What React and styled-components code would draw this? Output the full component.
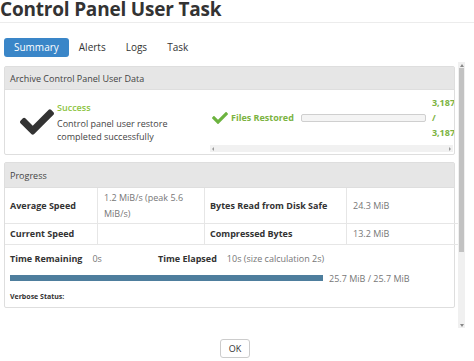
import React from 'react';
import styled, { createGlobalStyle } from 'styled-components';
import { FaCheck } from 'react-icons/fa';

const Global = createGlobalStyle`
  html, body { margin: 0; padding: 0; background: #fff; overflow: hidden; }
  body { font-family: "Open Sans", "Liberation Sans", sans-serif; color: #333; }
  * { box-sizing: border-box; }
`;

const Dialog = styled.div`
  width: 474px;
  height: 361px;
  display: flex;
  flex-direction: column;
  overflow: hidden;
`;

const Header = styled.div`
  height: 23px;
  border-bottom: 1px solid #ececec;
`;

const Title = styled.h1`
  margin: 0;
  font-size: 19px;
  font-weight: 700;
  line-height: 19px;
  letter-spacing: -0.2px;
  color: #333;
  white-space: nowrap;
`;

const TabBar = styled.div`
  display: flex;
  padding-left: 4px;
  margin-top: 15px;
`;

const Tab = styled.div`
  height: 19px;
  padding: 0 10px;
  font-size: 10px;
  line-height: 19px;
  border-radius: 3px;
  background: ${p => (p.$active ? '#3a86c8' : 'transparent')};
  color: ${p => (p.$active ? '#fff' : '#333')};
`;

const Body = styled.div`
  display: flex;
  margin-top: 5px;
  height: 266px;
`;

const ScrollContent = styled.div`
  width: 458px;
  padding: 4px 3px 0 4px;
  overflow: hidden;
`;

const VScroll = styled.div`
  width: 7px;
  display: flex;
  flex-direction: column;
  align-items: stretch;
  background: #f0f0f0;
`;

const Arrow = styled.div`
  height: 6px;
  display: flex;
  align-items: center;
  justify-content: center;
  &::before {
    content: '';
    border-left: 2px solid transparent;
    border-right: 2px solid transparent;
    ${p => (p.$dir === 'up' ? 'border-bottom: 3px solid #888;' : 'border-top: 3px solid #888;')}
  }
`;

const Thumb = styled.div`
  height: 184px;
  margin: 0 1px;
  background: #c2c2c2;
`;

const Track = styled.div`
  flex: 1;
`;

const Panel = styled.div`
  border: 1px solid #dedede;
  border-radius: 2px;
  margin-bottom: 7px;
  background: #fff;
`;

const PanelHeader = styled.div`
  height: ${p => p.$h}px;
  line-height: ${p => p.$h}px;
  background: #e6e6e6;
  border-bottom: 1px solid #dedede;
  padding-left: 5px;
  font-size: 9px;
  color: #444;
`;

const ResultBody = styled.div`
  height: 64px;
  display: flex;
`;

const ResultLeft = styled.div`
  width: 203px;
  display: flex;
  align-items: center;
  padding-left: 15px;
  flex-shrink: 0;
`;

const BigCheck = styled(FaCheck)`
  width: 34px;
  height: 34px;
  color: #333;
  flex-shrink: 0;
`;

const ResultText = styled.div`
  margin-left: 3px;
  font-size: 9px;
  line-height: 13px;
  color: #444;
`;

const SuccessLabel = styled.div`
  color: #8cc43f;
  font-weight: 600;
  margin-bottom: 3px;
`;

const ResultRight = styled.div`
  flex: 1;
  display: flex;
  flex-direction: column;
  overflow: hidden;
  padding-bottom: 2px;
`;

const FileRow = styled.div`
  flex: 1;
  display: flex;
  align-items: center;
  padding-left: 4px;
  white-space: nowrap;
`;

const SmallCheck = styled(FaCheck)`
  width: 16px;
  height: 16px;
  color: #6cb33f;
  flex-shrink: 0;
`;

const GreenLabel = styled.span`
  margin-left: 3px;
  font-size: 9px;
  font-weight: 700;
  color: #7cb342;
`;

const EmptyBar = styled.div`
  width: 125px;
  height: 8px;
  margin-left: 7px;
  border: 1px solid #cfcfcf;
  border-radius: 2px;
  background: #f4f4f4;
  flex-shrink: 0;
`;

const Count = styled.div`
  margin-left: 6px;
  font-size: 9px;
  font-weight: 700;
  color: #7cb342;
  line-height: 15px;
  flex-shrink: 0;
`;

const HScroll = styled.div`
  height: 7px;
  margin: 0 1px 0 2px;
  background: #f1f1f1;
  display: flex;
  justify-content: space-between;
  align-items: center;
  padding: 0 2px;
`;

const HArrow = styled.span`
  border-top: 2px solid transparent;
  border-bottom: 2px solid transparent;
  ${p => (p.$dir === 'left' ? 'border-right: 2px solid #999;' : 'border-left: 2px solid #999;')}
`;

const StatGrid = styled.div`
  display: grid;
  grid-template-columns: 93px 107px 142px 111px;
  grid-template-rows: 36px 21px;
`;

const Cell = styled.div`
  display: flex;
  align-items: center;
  padding: 0 ${p => (p.$value ? 6 : 5)}px 0 ${p => (p.$value ? 6 : 5)}px;
  font-size: 9px;
  line-height: 16px;
  font-weight: ${p => (p.$value ? 400 : 700)};
  color: ${p => (p.$value ? '#777' : '#333')};
  border-bottom: 1px solid #e6e6e6;
  border-right: ${p => (p.$last ? 'none' : '1px solid #e6e6e6')};
`;

const TimeRow = styled.div`
  display: flex;
  margin-top: 6px;
  height: 15px;
  align-items: center;
  padding-left: 5px;
  font-size: 9px;
  white-space: nowrap;
`;

const TimeGroup = styled.div`
  display: flex;
  width: ${p => (p.$w ? `${p.$w}px` : 'auto')};
`;

const TimeLabel = styled.span`
  font-weight: 700;
  color: #333;
`;

const TimeValue = styled.span`
  margin-left: 10px;
  color: #777;
`;

const BarRow = styled.div`
  display: flex;
  align-items: center;
  margin-top: 5px;
  height: 14px;
  padding-left: 5px;
`;

const Bar = styled.div`
  width: 313px;
  height: 6px;
  background: #4e7e9d;
`;

const BarText = styled.span`
  margin-left: 6px;
  font-size: 9px;
  color: #777;
  white-space: nowrap;
`;

const Verbose = styled.div`
  margin-top: 5px;
  height: 14px;
  line-height: 14px;
  padding-left: 5px;
  padding-bottom: 3px;
  font-size: 7px;
  font-weight: 700;
  color: #333;
  box-sizing: content-box;
`;

const Footer = styled.div`
  display: flex;
  justify-content: center;
  padding: 11px 4px 0 0;
`;

const OkButton = styled.button`
  width: 30px;
  height: 19px;
  padding: 0;
  border: 1px solid #cccccc;
  border-radius: 3px;
  background: #fff;
  font-family: inherit;
  font-size: 9px;
  color: #333;
`;

export default function App() {
  return (
    <Dialog>
      <Global />
      <Header>
        <Title>Control Panel User Task</Title>
      </Header>
      <TabBar>
        <Tab $active>Summary</Tab>
        <Tab>Alerts</Tab>
        <Tab>Logs</Tab>
        <Tab>Task</Tab>
      </TabBar>
      <Body>
        <ScrollContent>
          <Panel>
            <PanelHeader $h={23}>Archive Control Panel User Data</PanelHeader>
            <ResultBody>
              <ResultLeft>
                <BigCheck />
                <ResultText>
                  <SuccessLabel>Success</SuccessLabel>
                  <div>Control panel user restore</div>
                  <div>completed successfully</div>
                </ResultText>
              </ResultLeft>
              <ResultRight>
                <FileRow>
                  <SmallCheck />
                  <GreenLabel>Files Restored</GreenLabel>
                  <EmptyBar />
                  <Count>
                    <div>3,187</div>
                    <div>/</div>
                    <div>3,187</div>
                  </Count>
                </FileRow>
                <HScroll>
                  <HArrow $dir="left" />
                  <HArrow $dir="right" />
                </HScroll>
              </ResultRight>
            </ResultBody>
          </Panel>
          <Panel>
            <PanelHeader $h={25}>Progress</PanelHeader>
            <StatGrid>
              <Cell>Average Speed</Cell>
              <Cell $value>1.2 MiB/s (peak 5.6 MiB/s)</Cell>
              <Cell>Bytes Read from Disk Safe</Cell>
              <Cell $value $last>24.3 MiB</Cell>
              <Cell>Current Speed</Cell>
              <Cell $value></Cell>
              <Cell>Compressed Bytes</Cell>
              <Cell $value $last>13.2 MiB</Cell>
            </StatGrid>
            <TimeRow>
              <TimeGroup $w={148}>
                <TimeLabel>Time Remaining</TimeLabel>
                <TimeValue>0s</TimeValue>
              </TimeGroup>
              <TimeGroup>
                <TimeLabel>Time Elapsed</TimeLabel>
                <TimeValue>10s (size calculation 2s)</TimeValue>
              </TimeGroup>
            </TimeRow>
            <BarRow>
              <Bar />
              <BarText>25.7 MiB / 25.7 MiB</BarText>
            </BarRow>
            <Verbose>Verbose Status:</Verbose>
          </Panel>
        </ScrollContent>
        <VScroll>
          <Arrow $dir="up" />
          <Thumb />
          <Track />
          <Arrow $dir="down" />
        </VScroll>
      </Body>
      <Footer>
        <OkButton>OK</OkButton>
      </Footer>
    </Dialog>
  );
}
